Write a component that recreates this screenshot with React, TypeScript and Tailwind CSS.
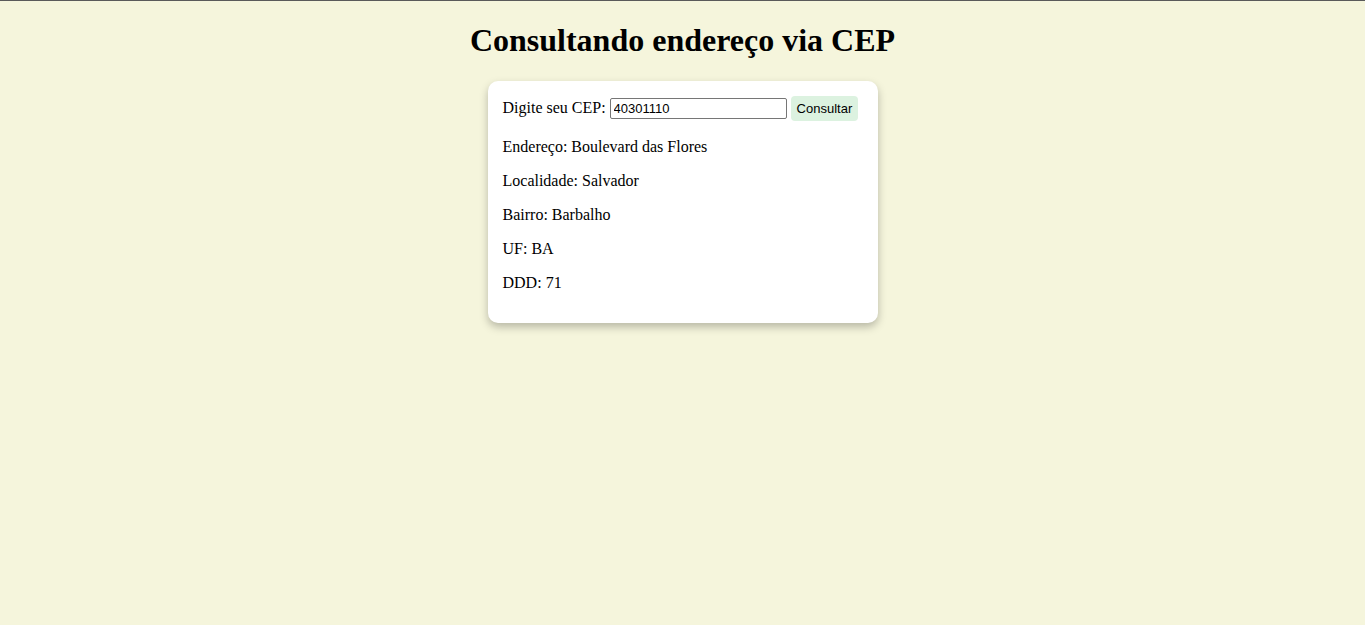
import React from 'react';

export default function App() {
  const [cep, setCep] = React.useState('40301110');

  const fields = [
    ['Endereço', 'Boulevard das Flores'],
    ['Localidade', 'Salvador'],
    ['Bairro', 'Barbalho'],
    ['UF', 'BA'],
    ['DDD', '71'],
  ];

  return (
    <div className="min-h-[625px] border-t border-[#5a5a5a] bg-[#f5f5dc] font-['Liberation_Serif',serif] text-black">
      <h1 className="my-[21.44px] text-center text-[32px] font-bold leading-[37px]">Consultando endereço via CEP</h1>

      <div className="mx-auto w-[390px] rounded-[10px] bg-white p-[15px] shadow-[0_4px_8px_rgba(0,0,0,0.25)]">
        <div className="flex h-[25px] items-center text-base">
          <label htmlFor="cep">Digite seu CEP:</label>
          <input
            id="cep"
            value={cep}
            onChange={(event) => setCep(event.target.value)}
            className="ml-[4px] h-[21px] w-[177px] rounded-[2px] border border-[#767676] px-[3px] font-['Liberation_Sans',Arial,sans-serif] text-[13px] outline-none"
          />
          <button
            type="button"
            className="ml-[4px] h-[25px] rounded-[4px] bg-[#dcf2e0] px-[6px] font-['Liberation_Sans',Arial,sans-serif] text-[13px]"
          >
            Consultar
          </button>
        </div>

        {fields.map(([label, value], index) => (
          <p key={label} className={`mb-4 text-base leading-[18px] ${index === 0 ? 'mt-[17px]' : 'mt-4'}`}>
            {label}: {value}
          </p>
        ))}
      </div>
    </div>
  );
}
